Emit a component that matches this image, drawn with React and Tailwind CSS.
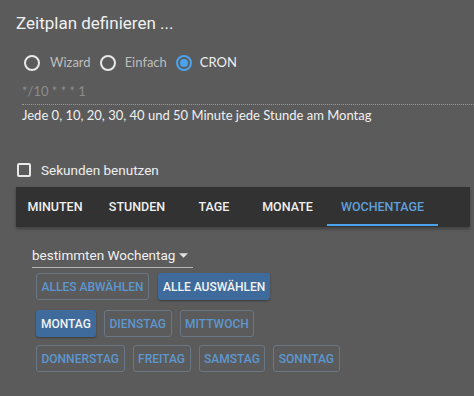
import React from "react";

const days2 = ["DONNERSTAG", "FREITAG", "SAMSTAG", "SONNTAG"];

function Btn({ children, filled }) {
  return filled ? (
    <div className="h-[27px] px-[5px] flex items-center rounded-[3px] bg-[#3e6b9c] text-[#f2f2f2] text-[12px] font-medium whitespace-nowrap shadow-[0_1px_2px_rgba(0,0,0,0.35)]">
      {children}
    </div>
  ) : (
    <div className="h-[27px] px-[4.5px] flex items-center rounded-[3px] border border-[#6a7784] text-[#5d97cf] text-[12px] font-medium whitespace-nowrap">
      {children}
    </div>
  );
}

const seg = { fontFamily: 'Lato, "Noto Sans", sans-serif' };

export default function App() {
  return (
    <div className="w-[474px] h-[396px] overflow-hidden bg-[#5b5b5b] text-white" style={{ fontFamily: 'Roboto, "Liberation Sans", Arial, sans-serif' }}>
      <div className="pl-4 pt-[12px] text-[17px] text-[#f0f0f0] leading-[22px]">Zeitplan definieren ...</div>
      <div className="pl-[24px] mt-[19px] flex items-center h-[20px] text-[13px]" style={seg}>
        <span className="w-[16px] h-[16px] rounded-full border-2 border-[#e8e8e8]" />
        <span className="ml-[10px] text-[#bdbdbd]">Wizard</span>
        <span className="ml-[9px] w-[16px] h-[16px] rounded-full border-2 border-[#e8e8e8]" />
        <span className="ml-[9px] text-[#bdbdbd]">Einfach</span>
        <span className="ml-[9px] w-[16px] h-[16px] rounded-full border-2 border-[#4aa3ec] flex items-center justify-center">
          <span className="w-[8px] h-[8px] rounded-full bg-[#4aa3ec]" />
        </span>
        <span className="ml-[8px] text-[#f0f0f0]">CRON</span>
      </div>
      <div className="ml-[22px] mt-[8px] pb-[3px] border-b border-dotted border-[#9a9a9a]">
        <div className="text-[13px] text-[#8c8c8c] leading-[20px]" style={seg}>*/10 * * * 1</div>
      </div>
      <div className="ml-[22px] text-[13px] text-[#f0f0f0] leading-[20px]" style={seg}>
        Jede 0, 10, 20, 30, 40 und 50 Minute jede Stunde am Montag
      </div>
      <div className="ml-[17px] mt-[37px] flex items-center h-[16px]">
        <span className="w-[14px] h-[14px] border-2 border-[#e8e8e8] rounded-[2px]" />
        <span className="ml-[10px] text-[13.5px] text-[#eeeeee]">Sekunden benutzen</span>
      </div>
      <div className="ml-4 mr-[4px] mt-[9px] h-[40px] bg-[#323232] flex text-[12.5px] font-medium text-[#f0f0f0] shadow-[0_2px_3px_rgba(0,0,0,0.3)]">
        <div className="w-[78px] flex items-center justify-center">MINUTEN</div>
        <div className="w-[86px] flex items-center justify-center">STUNDEN</div>
        <div className="w-[68px] flex items-center justify-center">TAGE</div>
        <div className="w-[79px] flex items-center justify-center">MONATE</div>
        <div className="w-[111px] flex items-center justify-center relative text-[#5fa0db]">
          WOCHENTAGE
          <span className="absolute left-0 right-0 bottom-[1px] h-[2px] bg-[#4aa3ec]" />
        </div>
      </div>
      <div className="ml-[32px] mt-[16px] w-[161px] border-b border-[#b5b5b5] flex items-center justify-between h-[25px]">
        <span className="text-[13.5px] text-[#f0f0f0] whitespace-nowrap">bestimmten Wochentag</span>
        <svg width="9" height="5" viewBox="0 0 10 5" className="mr-[5px] shrink-0"><path d="M0 0 L10 0 L5 5 Z" fill="#e0e0e0" /></svg>
      </div>
      <div className="ml-[36px] mt-[5px] flex flex-col">
        <div className="flex gap-[9px]">
          <Btn>ALLES ABWÄHLEN</Btn>
          <Btn filled>ALLE AUSWÄHLEN</Btn>
        </div>
        <div className="flex gap-[8px] mt-[10px]">
          <Btn filled>MONTAG</Btn>
          <Btn>DIENSTAG</Btn>
          <Btn>MITTWOCH</Btn>
        </div>
        <div className="flex gap-[8px] mt-[8px]">
          {days2.map((d) => (
            <Btn key={d}>{d}</Btn>
          ))}
        </div>
      </div>
    </div>
  );
}
